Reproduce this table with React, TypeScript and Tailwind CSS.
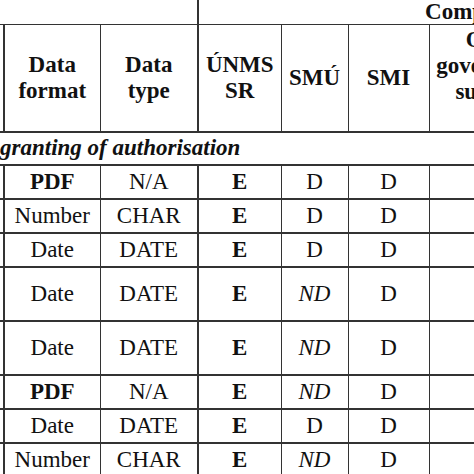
const line = 'border-[#333]'

type Row = {
    format: string
    formatBold?: boolean
    type: string
    smu: string
    smi: string
    tall?: boolean
}

const rows: Row[] = [
    { format: 'PDF', formatBold: true, type: 'N/A', smu: 'D', smi: 'D' },
    { format: 'Number', type: 'CHAR', smu: 'D', smi: 'D' },
    { format: 'Date', type: 'DATE', smu: 'D', smi: 'D' },
    { format: 'Date', type: 'DATE', smu: 'ND', smi: 'D', tall: true },
    { format: 'Date', type: 'DATE', smu: 'ND', smi: 'D', tall: true },
    { format: 'PDF', formatBold: true, type: 'N/A', smu: 'ND', smi: 'D' },
    { format: 'Date', type: 'DATE', smu: 'D', smi: 'D' },
    { format: 'Number', type: 'CHAR', smu: 'ND', smi: 'D' },
]

export default function App() {
    return (
        <div className="w-[474px] h-[474px] overflow-hidden bg-white text-[#111] font-['Liberation_Serif','Times_New_Roman',serif]">
            <table className="table-fixed border-collapse w-[760px] text-[23px] leading-[26px]">
                <colgroup>
                    <col className="w-[4px]" />
                    <col className="w-[96px]" />
                    <col className="w-[98px]" />
                    <col className="w-[83px]" />
                    <col className="w-[67px]" />
                    <col className="w-[81px]" />
                    <col className="w-[132px]" />
                    <col className="w-[199px]" />
                </colgroup>
                <thead>
                    <tr className="h-[24px]">
                        <td colSpan={3} className={`border-b ${line} p-0`} />
                        <td colSpan={5} className={`border-l-2 border-b ${line} p-0 pl-[226px] font-bold leading-[24px] whitespace-nowrap`}>
                            Competences of institutions
                        </td>
                    </tr>
                    <tr className="h-[107px] font-bold text-center">
                        <td className={`border-r-2 border-b-2 ${line} p-0`} />
                        <td className={`border-r border-b-2 ${line} p-0`}>Data<br />format</td>
                        <td className={`border-r-2 border-b-2 ${line} p-0`}>Data<br />type</td>
                        <td className={`border-r border-b-2 ${line} p-0`}>ÚNMS<br />SR</td>
                        <td className={`border-r border-b-2 ${line} p-0`}>SMÚ</td>
                        <td className={`border-r border-b-2 ${line} p-0`}>SMI</td>
                        <td className={`border-r border-b-2 ${line} p-0 pt-[2px] align-top`}>Other<br />government<br />subjects</td>
                        <td className={`border-b-2 ${line} p-0`} />
                    </tr>
                </thead>
                <tbody>
                    <tr className="h-[33px]">
                        <td colSpan={8} className={`border-b-2 ${line} p-0 font-bold italic whitespace-nowrap`}>
                            granting of authorisation
                        </td>
                    </tr>
                    {rows.map((r, i) => (
                        <tr key={i} className={r.tall ? 'h-[54px] text-center' : 'h-[34px] text-center'}>
                            <td className={`border-r-2 border-b-2 ${line} p-0`} />
                            <td className={`border-r border-b-2 ${line} p-0 ${r.formatBold ? 'font-bold' : ''}`}>{r.format}</td>
                            <td className={`border-r-2 border-b-2 ${line} p-0`}>{r.type}</td>
                            <td className={`border-r border-b-2 ${line} p-0 font-bold`}>E</td>
                            <td className={`border-r border-b-2 ${line} p-0 ${r.smu === 'ND' ? 'italic' : ''}`}>{r.smu}</td>
                            <td className={`border-r border-b-2 ${line} p-0`}>{r.smi}</td>
                            <td className={`border-r border-b-2 ${line} p-0`} />
                            <td className={`border-b-2 ${line} p-0`} />
                        </tr>
                    ))}
                </tbody>
            </table>
        </div>
    )
}
